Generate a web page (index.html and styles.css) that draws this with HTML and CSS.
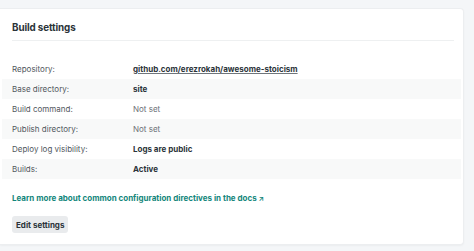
FILE: index.html
```html
<!DOCTYPE html>
<html>
<head>
<meta charset="utf-8">
<link rel="stylesheet" href="styles.css">
</head>
<body>
<section class="card">
  <h2 class="title">Build settings</h2>
  <div class="divider"></div>
  <dl class="rows">
    <div class="row"><dt>Repository:</dt><dd><a class="repo" href="#">github.com/erezrokah/awesome-stoicism</a></dd></div>
    <div class="row alt"><dt>Base directory:</dt><dd class="strong">site</dd></div>
    <div class="row"><dt>Build command:</dt><dd class="muted">Not set</dd></div>
    <div class="row alt"><dt>Publish directory:</dt><dd class="muted">Not set</dd></div>
    <div class="row"><dt>Deploy log visibility:</dt><dd class="strong">Logs are public</dd></div>
    <div class="row alt"><dt>Builds:</dt><dd class="strong">Active</dd></div>
  </dl>
  <a class="docs" href="#">Learn more about common configuration directives in the docs <span class="arrow">↗</span></a>
  <button class="btn">Edit settings</button>
</section>
</body>
</html>
```
FILE: styles.css
```css
* { box-sizing: border-box; }
html, body { margin: 0; padding: 0; }
body {
  background: #f4f6f8;
  font-family: Inter, "Noto Sans", sans-serif;
  width: 474px;
  height: 251px;
  overflow: hidden;
  padding-top: 8px;
}
.card {
  width: 464px;
  height: 237px;
  background: #fff;
  border: 1px solid #eceef0;
  border-left: none;
  border-radius: 0 4px 4px 0;
  box-shadow: 0 1px 2px rgba(0,0,0,0.04);
  display: flex;
  flex-direction: column;
}
.title {
  margin: 0;
  padding: 12px 12px 0 12px;
  height: 31px;
  font-size: 9.8px;
  font-weight: 700;
  letter-spacing: -0.1px;
  color: #2b3339;
  line-height: 14px;
}
.divider {
  height: 1px;
  background: #eef0f1;
  margin: 0 9px 0 12px;
}
.rows {
  margin: 18px 2px 0 2px;
  padding: 0;
}
.row {
  display: flex;
  align-items: center;
  height: 20px;
  padding-left: 10px;
  font-size: 8px;
}
.row.alt { background: #f8f9f9; }
dt {
  width: 121px;
  color: #51575d;
  margin: 0;
}
dd { margin: 0; color: #2b3339; }
.strong { font-weight: 700; }
.muted { color: #6c7177; }
.repo {
  color: #2b3339;
  font-weight: 700;
  text-decoration: underline;
  text-decoration-color: #6f767c;
}
.docs {
  margin: 13px 0 0 12px;
  font-size: 8px;
  font-weight: 700;
  color: #13867b;
  text-decoration: none;
  line-height: 12px;
}
.arrow { font-size: 7px; }
.btn {
  align-self: flex-start;
  margin: 11px 0 0 12px;
  height: 17px;
  padding: 0 4px;
  border: none;
  border-radius: 3px;
  background: #e9ebed;
  font-family: inherit;
  font-size: 8px;
  font-weight: 700;
  color: #2b3339;
}
```
